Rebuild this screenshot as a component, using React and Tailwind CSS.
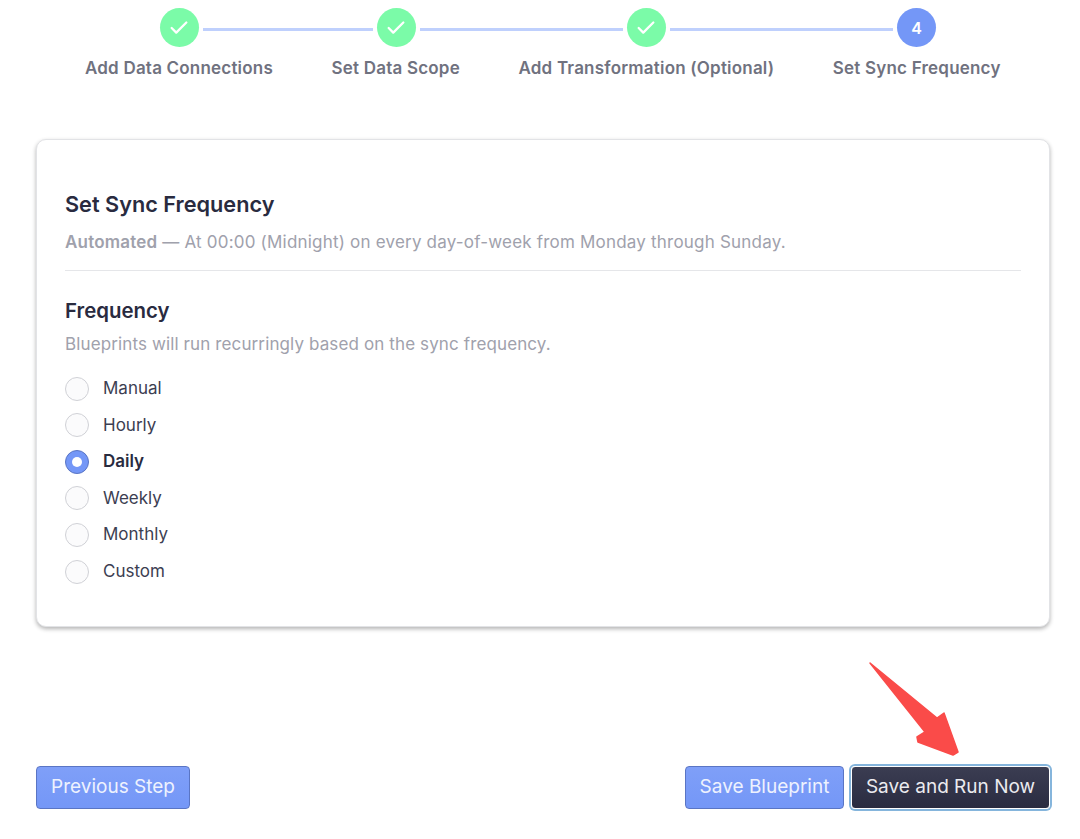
import React from 'react';
import { Check } from 'lucide-react';

const steps = ['Add Data Connections', 'Set Data Scope', 'Add Transformation (Optional)', 'Set Sync Frequency'];
const options = ['Manual', 'Hourly', 'Daily', 'Weekly', 'Monthly', 'Custom'];

const DoneCircle = () => (
  <div className="w-[39px] h-[39px] shrink-0 rounded-full bg-[#7bfba8] flex items-center justify-center">
    <Check size={22} strokeWidth={2.5} className="text-white -translate-x-px" />
  </div>
);

const Line = ({ width }) => <div className={`h-[3px] mt-[3px] bg-[#bfd0fd] ${width}`} />;

const Radio = ({ label, checked }) => (
  <div className="h-[36.6px] flex items-center gap-[14px]">
    {checked ? (
      <span className="w-[24px] h-[24px] rounded-full bg-[#7497f7] border border-[#5a75c4] flex items-center justify-center">
        <span className="w-[10px] h-[10px] rounded-full bg-white" />
      </span>
    ) : (
      <span className="w-[24px] h-[24px] rounded-full bg-[#fbfbfc] border-[1.5px] border-[#d0d1d6]" />
    )}
    <span className={checked ? 'text-[17px] font-semibold text-[#292b3f]' : 'text-[17px] text-[#3c3e52]'}>{label}</span>
  </div>
);

export default function App() {
  return (
    <div className="relative w-[1080px] h-[839px] bg-white overflow-hidden font-['Inter',sans-serif]">
      {/* stepper */}
      <div className="pt-[8px] pl-[160px] flex items-center">
        <DoneCircle />
        <div className="w-[4px]" />
        <Line width="w-[170px]" />
        <div className="w-[4px]" />
        <DoneCircle />
        <div className="w-[4px]" />
        <Line width="w-[203px]" />
        <div className="w-[4px]" />
        <DoneCircle />
        <div className="w-[4px]" />
        <Line width="w-[223px]" />
        <div className="w-[4px]" />
        <div className="w-[39px] h-[39px] shrink-0 rounded-full bg-[#7497f7] flex items-center justify-center text-white text-[16px] font-semibold">
          4
        </div>
      </div>
      <div className="mt-[9px] pl-[85px] flex gap-[58.6px] text-[17px] leading-[24px] font-semibold tracking-[0.2px] text-[#70727f] whitespace-nowrap">
        {steps.map(step => (
          <span key={step}>{step}</span>
        ))}
      </div>

      {/* card */}
      <div className="mt-[59px] ml-[36px] w-[1014px] h-[488px] px-[28px] pt-[48px] bg-white rounded-[10px] border border-[#e2e3e6] shadow-[0_2px_4px_rgba(0,0,0,0.3)]">
        <h2 className="text-[21.7px] leading-[32px] font-semibold text-[#292b3f]">Set Sync Frequency</h2>
        <p className="mt-[10px] text-[17px] leading-[24px] tracking-[0.2px] text-[#a0a1ac]">
          <span className="font-semibold">Automated</span> — At 00:00 (Midnight) on every day-of-week from Monday through Sunday.
        </p>
        <div className="mt-[16px] h-px bg-[#e5e6e9]" />
        <h3 className="mt-[26px] text-[20.4px] leading-[28px] font-semibold text-[#292b3f]">Frequency</h3>
        <p className="mt-[7px] text-[17px] leading-[24px] tracking-[0.12px] text-[#a0a1ac]">Blueprints will run recurringly based on the sync frequency.</p>
        <div className="mt-[14.4px]">
          {options.map(opt => (
            <Radio key={opt} label={opt} checked={opt === 'Daily'} />
          ))}
        </div>
      </div>

      {/* footer buttons */}
      <div className="mt-[139px] ml-[36px] w-[1014px] flex items-center justify-between text-[19px]">
        <button className="h-[43px] w-[154px] rounded-[4px] bg-linear-to-b from-[#7f9ff8] to-[#7497f7] border border-[#5a75c4] text-[#eef2fe]">Previous Step</button>
        <div className="flex items-center gap-[7px]">
          <button className="h-[43px] w-[159px] rounded-[4px] bg-linear-to-b from-[#7f9ff8] to-[#7497f7] border border-[#5a75c4] text-[#eef2fe]">Save Blueprint</button>
          <button className="h-[43px] w-[199px] rounded-[4px] bg-linear-to-b from-[#3b3d52] to-[#2a2c41] border border-white text-[#ebebef] shadow-[0_0_0_2px_#85b5dc]">Save and Run Now</button>
        </div>
      </div>

      {/* annotation arrow */}
      <svg className="absolute left-0 top-0 pointer-events-none" width="1080" height="839" viewBox="0 0 1080 839">
        <path
          d="M870 663 L937 718 L944 713 L958 752 L953 755 L918 742 L917 737 L925 732 Z"
          fill="#fa4b49"
          stroke="#fa4b49"
          strokeWidth="1.5"
          strokeLinejoin="round"
        />
      </svg>
    </div>
  );
}
